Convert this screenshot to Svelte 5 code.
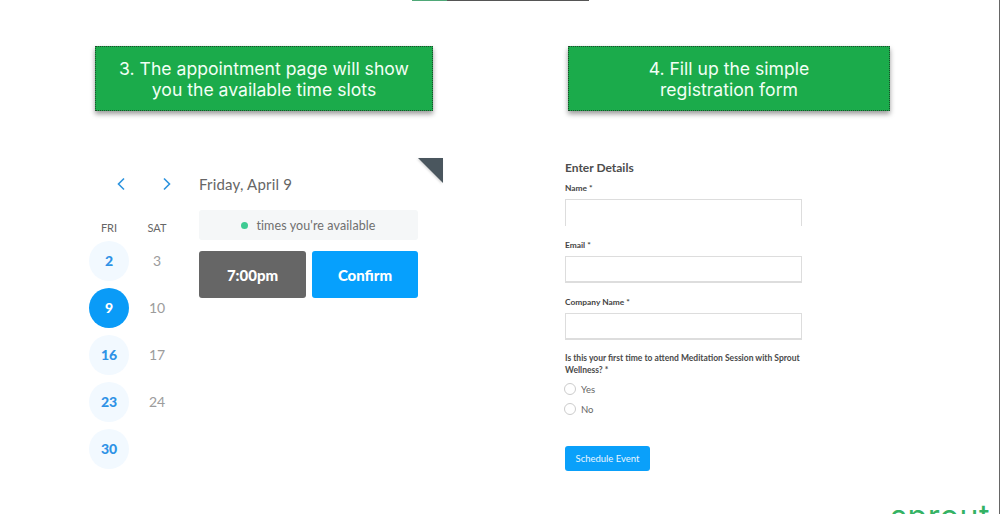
<script>
  const rows = [
    { a: '2', b: '3' },
    { a: '9', b: '10', sel: true },
    { a: '16', b: '17' },
    { a: '23', b: '24' },
    { a: '30', b: '' }
  ];
</script>

<div class="page">
  <div class="topbar"><span class="topgreen"></span></div>
  <div class="columns">
    <section class="left">
      <h2 class="tag tag-left">3. The appointment page will show<br />you the available time slots</h2>
      <div class="scheduler">
        <div class="corner"></div>
        <div class="calendar">
          <div class="nav">
            <svg width="10" height="14" viewBox="0 0 10 14"><path d="M8 1.5 2.5 7 8 12.5" /></svg>
            <svg width="10" height="14" viewBox="0 0 10 14"><path d="M2 1.5 7.5 7 2 12.5" /></svg>
          </div>
          <div class="week"><span>FRI</span><span>SAT</span></div>
          <div class="days">
            {#each rows as r}
              <div class="day" class:sel={r.sel}>{r.a}</div>
              <div class="off">{r.b}</div>
            {/each}
          </div>
        </div>
        <div class="times">
          <div class="date">Friday, April 9</div>
          <div class="avail"><i></i>times you're available</div>
          <div class="actions">
            <button class="time">7:00pm</button>
            <button class="confirm">Confirm</button>
          </div>
        </div>
      </div>
    </section>
    <section class="right">
      <h2 class="tag tag-right">4. Fill up the simple<br />registration form</h2>
      <form class="form">
        <h3>Enter Details</h3>
        <label for="n">Name *</label>
        <input id="n" class="open" />
        <label for="e" class="l2">Email *</label>
        <input id="e" />
        <label for="c" class="l3">Company Name *</label>
        <input id="c" />
        <p class="q">Is this your first time to attend Meditation Session with Sprout Wellness? *</p>
        <div class="radio"><span></span>Yes</div>
        <div class="radio"><span></span>No</div>
        <button type="button" class="submit">Schedule Event</button>
      </form>
    </section>
  </div>
  <div class="logo">sprout</div>
</div>

<style>
  :global(body) { margin: 0; background: #fff; }
  .page {
    position: relative;
    width: 1000px;
    height: 514px;
    overflow: hidden;
    background: #fff;
    border-right: 1px solid #666;
    box-sizing: border-box;
    font-family: "Lato", "Open Sans", sans-serif;
  }
  .topbar {
    width: 177px;
    height: 1px;
    margin-left: 412px;
    background: #555;
  }
  .topgreen { display: block; width: 35px; height: 1px; background: #4fa878; }
  .columns { display: flex; padding: 45px 0 0 95px; }
  .left { width: 473px; }
  .right { width: 322px; }
  .tag {
    margin: 0;
    height: 65px;
    box-sizing: border-box;
    padding-top: 11px;
    background: #1bab4b;
    border: 1px dotted #1d4a2c;
    box-shadow: 0 3px 5px rgba(0, 0, 0, .4);
    color: #f2fff5;
    font-family: "Inter", "Roboto", sans-serif;
    font-size: 17.6px;
    font-weight: 400;
    line-height: 21px;
    text-align: center;
  }
  .tag-left { width: 338px; }
  .tag-right { width: 322px; }

  .scheduler {
    position: relative;
    display: flex;
    width: 348px;
    height: 320px;
    margin-top: 47px;
    box-sizing: border-box;
    padding-top: 19px;
  }
  .corner {
    position: absolute;
    right: 0;
    top: 0;
    width: 0;
    height: 0;
    border-top: 25px solid #4a565e;
    border-left: 25px solid transparent;
    filter: drop-shadow(-1px 1px 1px rgba(0,0,0,.15));
  }
  .calendar { width: 104px; margin-left: -6px; }
  .nav { display: flex; gap: 36px; padding-left: 27px; height: 14px; }
  .nav svg { fill: none; stroke: #2c93de; stroke-width: 1.6; }
  .week {
    display: grid;
    grid-template-columns: 40px 40px;
    column-gap: 8px;
    margin-top: 30px;
    font-size: 11px;
    line-height: 14px;
    color: #666;
    text-align: center;
  }
  .days {
    display: grid;
    grid-template-columns: 40px 40px;
    column-gap: 8px;
    row-gap: 7px;
    margin-top: 6px;
  }
  .day, .off {
    width: 40px;
    height: 40px;
    display: flex;
    align-items: center;
    justify-content: center;
    font-size: 14px;
    padding-bottom: 1px;
    box-sizing: border-box;
  }
  .day {
    border-radius: 50%;
    background: #f2f9ff;
    color: #2e92e6;
    font-weight: 900;
  }
  .day.sel { background: #0a9bf7; color: #fff; }
  .off { color: #9c9c9c; }

  .times { width: 219px; margin-left: 6px; }
  .date { font-size: 15px; line-height: 14px; color: #666; letter-spacing: .2px; }
  .avail {
    display: flex;
    align-items: center;
    justify-content: center;
    height: 30px;
    margin-top: 19px;
    background: #f5f7f8;
    border-radius: 3px;
    color: #6f6f6f;
    font-size: 12.5px;
    letter-spacing: .1px;
  }
  .avail i {
    width: 7px;
    height: 7px;
    border-radius: 50%;
    background: #3ecb93;
    margin-right: 8px;
  }
  .actions { display: flex; gap: 6px; margin-top: 11px; }
  .actions button {
    width: 107px;
    height: 47px;
    border: 0;
    border-radius: 3px;
    color: #fff;
    font-family: inherit;
    font-size: 15px;
    font-weight: 900;
    padding: 0;
  }
  .time { background: #666; }
  .actions .confirm { background: #06a0fd; width: 106px; }

  .form {
    margin-top: 49px;
    width: 240px;
    color: #4a4a4a;
    display: flex;
    flex-direction: column;
    align-items: flex-start;
    margin-left: -3px;
  }
  .form h3 { margin: 0; font-size: 12px; line-height: 16px; font-weight: 700; color: #4d4d4d; }
  label { font-size: 8.4px; line-height: 10px; font-weight: 700; margin-top: 7px; color: #444; }
  label.l2, label.l3 { margin-top: 14px; }
  input {
    display: block;
    width: 237px;
    height: 27px;
    margin-top: 6px;
    padding: 0;
    box-sizing: border-box;
    border: 1px solid #ddd;
    border-bottom-width: 2px;
    background: #fff;
    border-radius: 0;
  }
  input.open { border-bottom: 0; }
  .q { margin: 12px 0 0; font-size: 8.5px; line-height: 12px; font-weight: 700; color: #4a4a4a; width: 240px; }
  .radio { display: flex; align-items: center; height: 20px; font-size: 9.5px; color: #666; }
  .radio:first-of-type { margin-top: 3px; }
  .radio span {
    width: 10px;
    height: 10px;
    border: 1px solid #ccc;
    border-radius: 50%;
    margin: 0 5px 0 -1px;
  }
  .submit {
    margin-top: 27px;
    width: 85px;
    height: 25px;
    padding: 0;
    border: 0;
    border-radius: 3px;
    background: #0aa0fa;
    color: #eaf6ff;
    font-family: inherit;
    font-size: 9.5px;
  }
  .logo {
    position: absolute;
    left: 890px;
    top: 497px;
    font-family: "Inter", sans-serif;
    font-size: 32px;
    line-height: 40px;
    color: #34b264;
    letter-spacing: .6px;
    font-weight: 400;
  }
</style>
